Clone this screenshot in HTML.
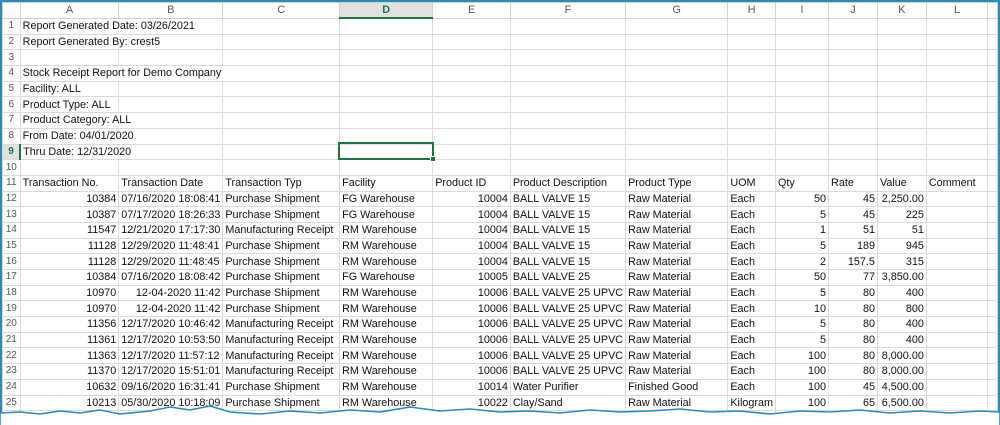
<!DOCTYPE html>
<html><head><style>
html,body{margin:0;width:1000px;height:425px;overflow:hidden;background:#fff;font-family:"Liberation Sans",sans-serif;}
#frame{position:absolute;left:0;top:0;width:996px;height:423px;border:2px solid #2a8ab8;border-bottom:none;overflow:hidden;}
table{border-collapse:collapse;table-layout:fixed;position:absolute;left:0;top:0;font-size:10.8px;color:#111;}
td{border:1px solid #dadada;height:14.7px;padding:0 2px;white-space:nowrap;overflow:hidden;line-height:14px;}
tr.h td{background:#fff;color:#555;text-align:center;height:14px;border-color:#d0d0d0;}
td.rh{color:#555;text-align:center;padding:0;font-size:10px;}
.r{text-align:right;}
tr.h td.sel{background:#e1e1e1;color:#217346;font-weight:bold;border-bottom:2px solid #217346;}
td.rsel{background:#e1e1e1;color:#217346;font-weight:bold;border-right:2px solid #217346;}
#cur{position:absolute;left:336px;top:140px;width:92px;height:14px;border:2px solid #217346;}
#cur:after{content:"";position:absolute;right:-4px;bottom:-4px;width:4px;height:4px;background:#217346;border:1px solid #fff;}
svg{position:absolute;left:0;top:0;}
</style></head><body>
<div id="frame">
<table>
<colgroup><col style="width:18px"><col style="width:99px"><col style="width:102px"><col style="width:117px"><col style="width:94px"><col style="width:79px"><col style="width:115px"><col style="width:104px"><col style="width:46px"><col style="width:55px"><col style="width:50px"><col style="width:49px"><col style="width:62px"><col style="width:10px"></colgroup>
<tr class="h"><td></td><td>A</td><td>B</td><td>C</td><td class="sel">D</td><td>E</td><td>F</td><td>G</td><td>H</td><td>I</td><td>J</td><td>K</td><td>L</td><td></td></tr>
<tr><td class="rh">1</td><td colspan="2">Report Generated Date: 03/26/2021</td><td></td><td></td><td></td><td></td><td></td><td></td><td></td><td></td><td></td><td></td><td></td></tr>
<tr><td class="rh">2</td><td colspan="2">Report Generated By: crest5</td><td></td><td></td><td></td><td></td><td></td><td></td><td></td><td></td><td></td><td></td><td></td></tr>
<tr><td class="rh">3</td><td></td><td></td><td></td><td></td><td></td><td></td><td></td><td></td><td></td><td></td><td></td><td></td><td></td></tr>
<tr><td class="rh">4</td><td colspan="3">Stock Receipt Report for Demo Company</td><td></td><td></td><td></td><td></td><td></td><td></td><td></td><td></td><td></td><td></td></tr>
<tr><td class="rh">5</td><td>Facility: ALL</td><td></td><td></td><td></td><td></td><td></td><td></td><td></td><td></td><td></td><td></td><td></td><td></td></tr>
<tr><td class="rh">6</td><td>Product Type: ALL</td><td></td><td></td><td></td><td></td><td></td><td></td><td></td><td></td><td></td><td></td><td></td><td></td></tr>
<tr><td class="rh">7</td><td colspan="2">Product Category: ALL</td><td></td><td></td><td></td><td></td><td></td><td></td><td></td><td></td><td></td><td></td><td></td></tr>
<tr><td class="rh">8</td><td colspan="2">From Date: 04/01/2020</td><td></td><td></td><td></td><td></td><td></td><td></td><td></td><td></td><td></td><td></td><td></td></tr>
<tr><td class="rh rsel">9</td><td colspan="2">Thru Date: 12/31/2020</td><td></td><td></td><td></td><td></td><td></td><td></td><td></td><td></td><td></td><td></td><td></td></tr>
<tr><td class="rh">10</td><td></td><td></td><td></td><td></td><td></td><td></td><td></td><td></td><td></td><td></td><td></td><td></td><td></td></tr>
<tr><td class="rh">11</td><td>Transaction No.</td><td>Transaction Date</td><td>Transaction Typ</td><td>Facility</td><td>Product ID</td><td>Product Description</td><td>Product Type</td><td>UOM</td><td>Qty</td><td>Rate</td><td>Value</td><td>Comment</td><td></td></tr>
<tr><td class="rh">12</td><td class="r">10384</td><td>07/16/2020 18:08:41</td><td>Purchase Shipment</td><td>FG Warehouse</td><td class="r">10004</td><td>BALL VALVE 15</td><td>Raw Material</td><td>Each</td><td class="r">50</td><td class="r">45</td><td class="r">2,250.00</td><td></td><td></td></tr>
<tr><td class="rh">13</td><td class="r">10387</td><td>07/17/2020 18:26:33</td><td>Purchase Shipment</td><td>FG Warehouse</td><td class="r">10004</td><td>BALL VALVE 15</td><td>Raw Material</td><td>Each</td><td class="r">5</td><td class="r">45</td><td class="r">225</td><td></td><td></td></tr>
<tr><td class="rh">14</td><td class="r">11547</td><td>12/21/2020 17:17:30</td><td>Manufacturing Receipt</td><td>RM Warehouse</td><td class="r">10004</td><td>BALL VALVE 15</td><td>Raw Material</td><td>Each</td><td class="r">1</td><td class="r">51</td><td class="r">51</td><td></td><td></td></tr>
<tr><td class="rh">15</td><td class="r">11128</td><td>12/29/2020 11:48:41</td><td>Purchase Shipment</td><td>RM Warehouse</td><td class="r">10004</td><td>BALL VALVE 15</td><td>Raw Material</td><td>Each</td><td class="r">5</td><td class="r">189</td><td class="r">945</td><td></td><td></td></tr>
<tr><td class="rh">16</td><td class="r">11128</td><td>12/29/2020 11:48:45</td><td>Purchase Shipment</td><td>RM Warehouse</td><td class="r">10004</td><td>BALL VALVE 15</td><td>Raw Material</td><td>Each</td><td class="r">2</td><td class="r">157.5</td><td class="r">315</td><td></td><td></td></tr>
<tr><td class="rh">17</td><td class="r">10384</td><td>07/16/2020 18:08:42</td><td>Purchase Shipment</td><td>FG Warehouse</td><td class="r">10005</td><td>BALL VALVE 25</td><td>Raw Material</td><td>Each</td><td class="r">50</td><td class="r">77</td><td class="r">3,850.00</td><td></td><td></td></tr>
<tr><td class="rh">18</td><td class="r">10970</td><td class="r">12-04-2020 11:42</td><td>Purchase Shipment</td><td>RM Warehouse</td><td class="r">10006</td><td>BALL VALVE 25 UPVC</td><td>Raw Material</td><td>Each</td><td class="r">5</td><td class="r">80</td><td class="r">400</td><td></td><td></td></tr>
<tr><td class="rh">19</td><td class="r">10970</td><td class="r">12-04-2020 11:42</td><td>Purchase Shipment</td><td>RM Warehouse</td><td class="r">10006</td><td>BALL VALVE 25 UPVC</td><td>Raw Material</td><td>Each</td><td class="r">10</td><td class="r">80</td><td class="r">800</td><td></td><td></td></tr>
<tr><td class="rh">20</td><td class="r">11356</td><td>12/17/2020 10:46:42</td><td>Manufacturing Receipt</td><td>RM Warehouse</td><td class="r">10006</td><td>BALL VALVE 25 UPVC</td><td>Raw Material</td><td>Each</td><td class="r">5</td><td class="r">80</td><td class="r">400</td><td></td><td></td></tr>
<tr><td class="rh">21</td><td class="r">11361</td><td>12/17/2020 10:53:50</td><td>Manufacturing Receipt</td><td>RM Warehouse</td><td class="r">10006</td><td>BALL VALVE 25 UPVC</td><td>Raw Material</td><td>Each</td><td class="r">5</td><td class="r">80</td><td class="r">400</td><td></td><td></td></tr>
<tr><td class="rh">22</td><td class="r">11363</td><td>12/17/2020 11:57:12</td><td>Manufacturing Receipt</td><td>RM Warehouse</td><td class="r">10006</td><td>BALL VALVE 25 UPVC</td><td>Raw Material</td><td>Each</td><td class="r">100</td><td class="r">80</td><td class="r">8,000.00</td><td></td><td></td></tr>
<tr><td class="rh">23</td><td class="r">11370</td><td>12/17/2020 15:51:01</td><td>Manufacturing Receipt</td><td>RM Warehouse</td><td class="r">10006</td><td>BALL VALVE 25 UPVC</td><td>Raw Material</td><td>Each</td><td class="r">100</td><td class="r">80</td><td class="r">8,000.00</td><td></td><td></td></tr>
<tr><td class="rh">24</td><td class="r">10632</td><td>09/16/2020 16:31:41</td><td>Purchase Shipment</td><td>RM Warehouse</td><td class="r">10014</td><td>Water Purifier</td><td>Finished Good</td><td>Each</td><td class="r">100</td><td class="r">45</td><td class="r">4,500.00</td><td></td><td></td></tr>
<tr><td class="rh">25</td><td class="r">10213</td><td>05/30/2020 10:18:09</td><td>Purchase Shipment</td><td>RM Warehouse</td><td class="r">10022</td><td>Clay/Sand</td><td>Raw Material</td><td>Kilogram</td><td class="r">100</td><td class="r">65</td><td class="r">6,500.00</td><td></td><td></td></tr>
<tr><td class="rh">26</td><td class="r">10970</td><td class="r">12-04-2020 11:42</td><td>Purchase Shipment</td><td>RM Warehouse</td><td class="r">10022</td><td>Clay/Sand</td><td>Raw Material</td><td>Kilogram</td><td class="r">7</td><td class="r">65</td><td class="r">455</td><td></td><td></td></tr>
</table>
<div id="cur"></div>
</div>
<svg width="1000" height="425" viewBox="0 0 1000 425">
<path d="M0 413 L20 412 L40 414 L60 411 L80 413 L100 410 L120 414 L150 411 L170 407 L190 410 L210 406 L230 412 L260 414 L290 411 L320 413 L350 410 L380 412 L410 407 L440 411 L470 409 L500 412 L530 411 L560 413 L590 410 L620 412 L650 411 L680 409 L710 412 L740 411 L770 414 L800 411 L830 412 L860 410 L890 413 L920 411 L950 413 L980 411 L1000 412 L1000 426 L0 426 Z" fill="#fff" stroke="#2a8ab8" stroke-width="1.6"/>
</svg>
</body></html>
